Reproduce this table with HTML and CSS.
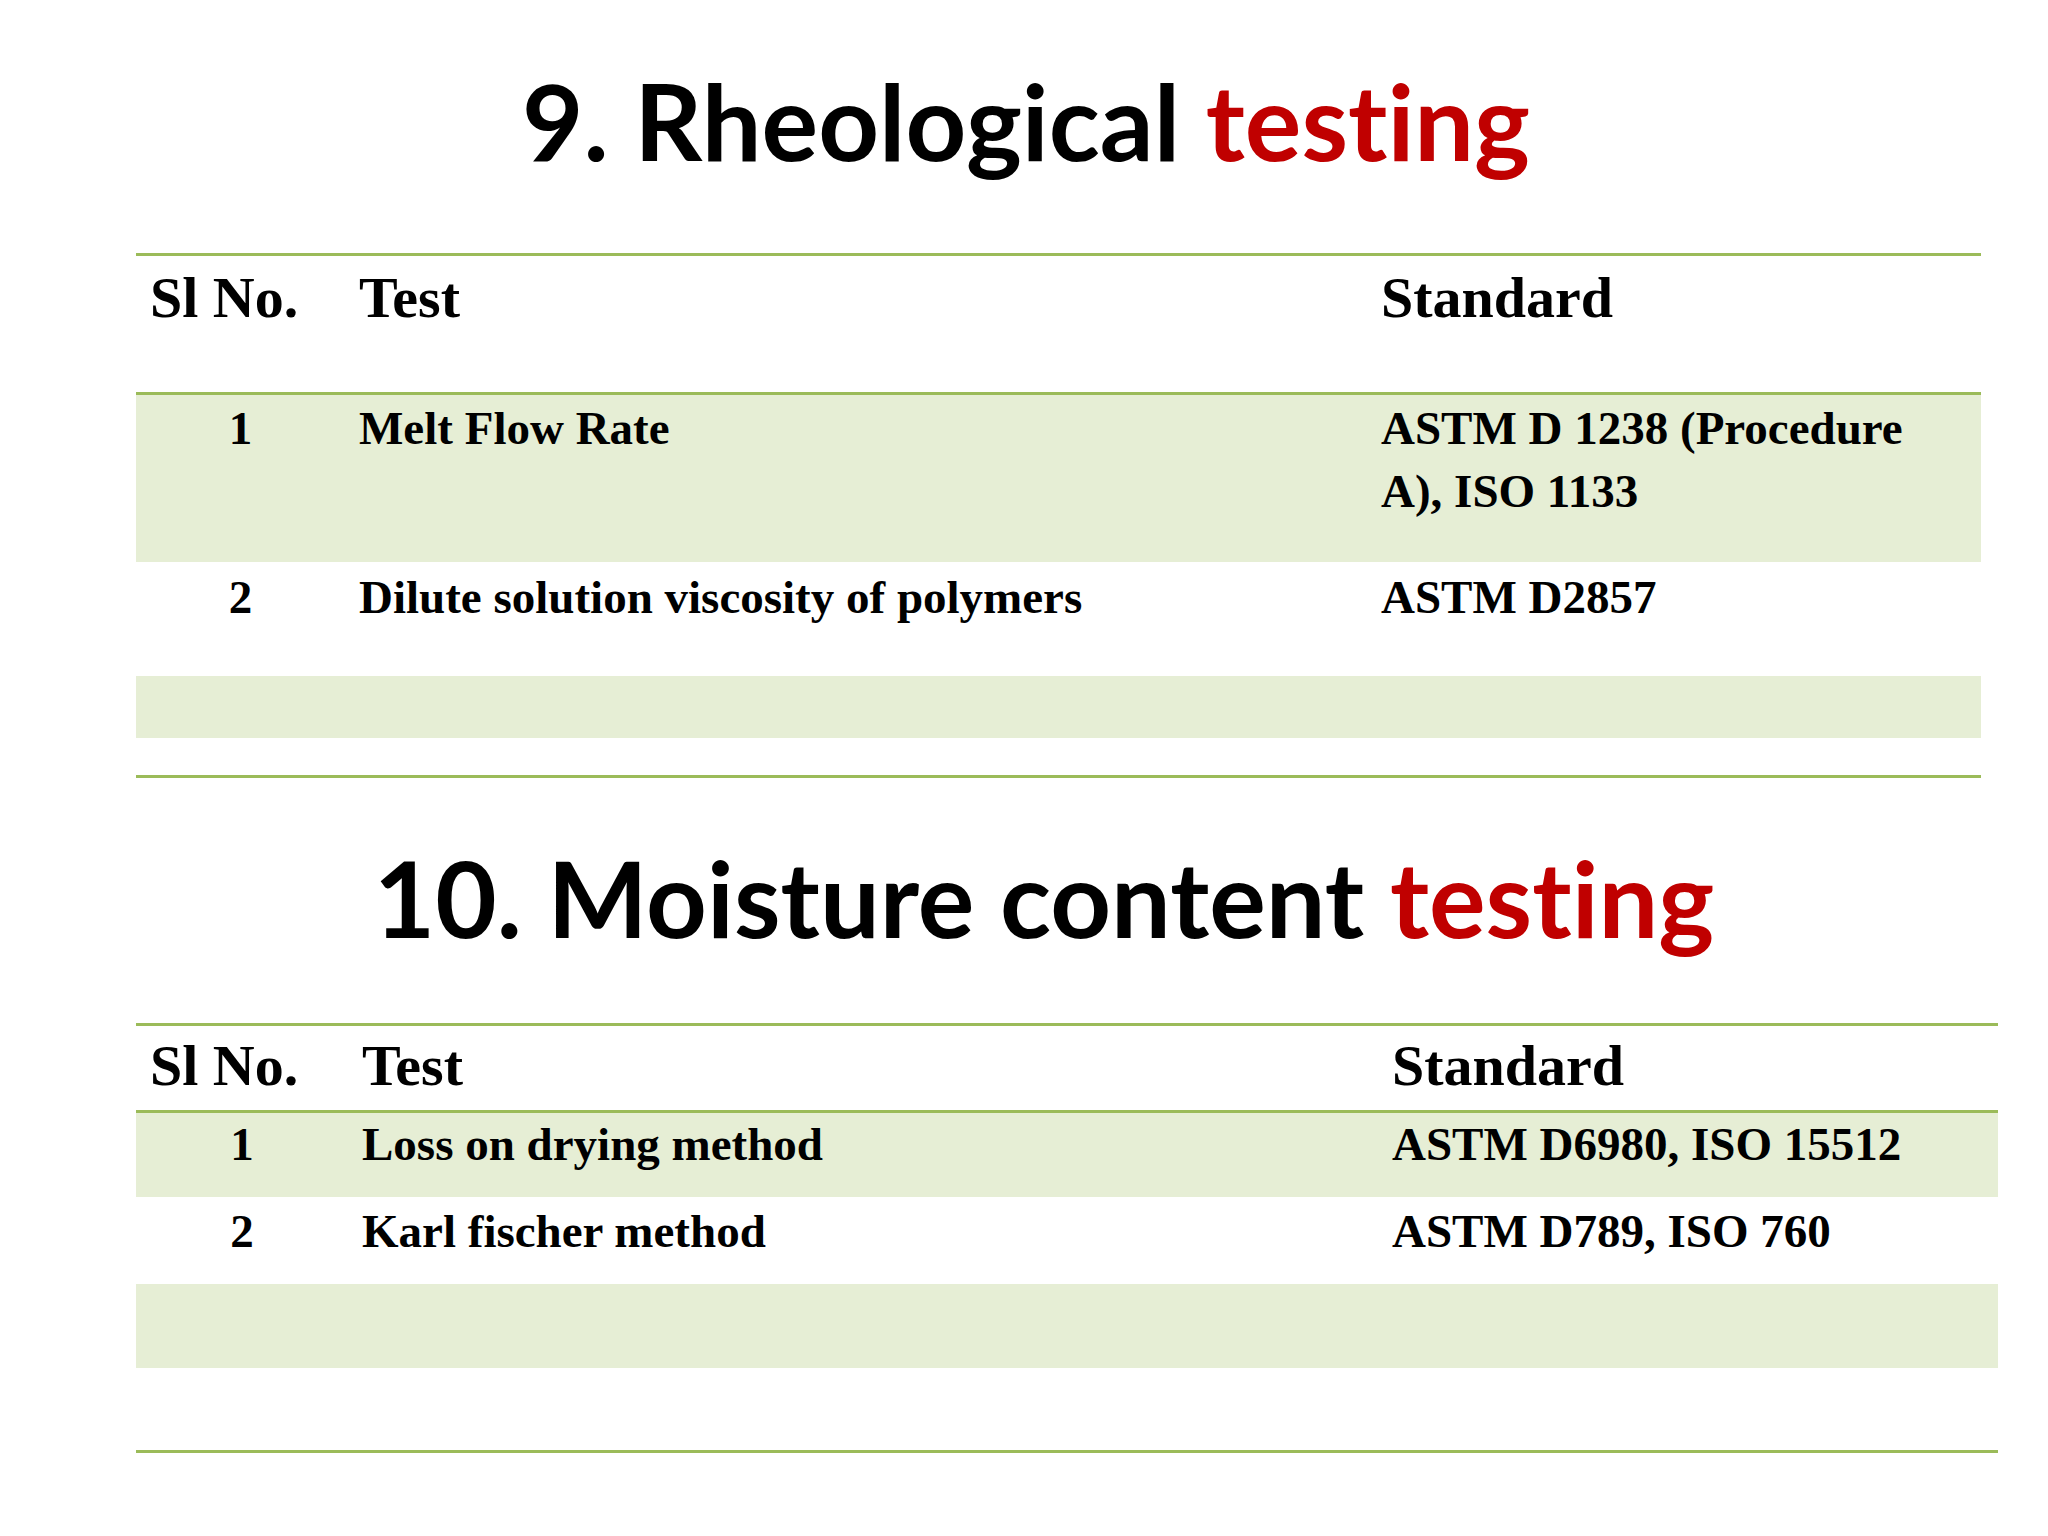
FILE: index.html
```html
<!DOCTYPE html>
<html lang="en">
<head>
<meta charset="utf-8">
<title>Rheological and Moisture content testing</title>
<link rel="stylesheet" href="styles.css">
</head>
<body>
<main class="page">
  <h1 class="title title-one">9. Rheological <span class="accent">testing</span></h1>

  <section class="table table-one">
    <div class="row head">
      <div class="cell num-head">Sl No.</div>
      <div class="cell">Test</div>
      <div class="cell">Standard</div>
    </div>
    <div class="row band first r1">
      <div class="cell num">1</div>
      <div class="cell">Melt Flow Rate</div>
      <div class="cell">ASTM D 1238 (Procedure<br>A), ISO 1133</div>
    </div>
    <div class="row r2">
      <div class="cell num">2</div>
      <div class="cell">Dilute solution viscosity of polymers</div>
      <div class="cell">ASTM D2857</div>
    </div>
    <div class="row band r3"></div>
    <div class="row r4"></div>
  </section>

  <h1 class="title title-two">10. Moisture content <span class="accent">testing</span></h1>

  <section class="table table-two">
    <div class="row head">
      <div class="cell num-head">Sl No.</div>
      <div class="cell">Test</div>
      <div class="cell">Standard</div>
    </div>
    <div class="row band first r1">
      <div class="cell num">1</div>
      <div class="cell">Loss on drying method</div>
      <div class="cell">ASTM D6980, ISO 15512</div>
    </div>
    <div class="row r2">
      <div class="cell num">2</div>
      <div class="cell">Karl fischer method</div>
      <div class="cell">ASTM D789, ISO 760</div>
    </div>
    <div class="row band r3"></div>
    <div class="row r4"></div>
  </section>
</main>
</body>
</html>
```

FILE: styles.css
```css
html, body {
  margin: 0;
  padding: 0;
  background: #ffffff;
}

.page {
  width: 2048px;
  height: 1536px;
  overflow: hidden;
  display: flex;
  flex-direction: column;
}

.title {
  margin: 0;
  font-family: Lato, "Open Sans", sans-serif;
  font-weight: 700;
  font-size: 106px;
  line-height: 106px;
  height: 106px;
  color: #000000;
  text-align: center;
  white-space: nowrap;
  font-variant-ligatures: none;
  font-feature-settings: "liga" 0, "clig" 0;
}

.accent {
  color: #c00000;
}

.title-one {
  margin-top: 67px;
  padding-left: 4px;
}

.title-two {
  margin-top: 66px;
  padding-left: 40px;
}

.table {
  margin-left: 136px;
  border-top: 3px solid #9bbb59;
  border-bottom: 3px solid #9bbb59;
  font-family: "Liberation Serif", "Times New Roman", serif;
  font-weight: 700;
  color: #000000;
  display: flex;
  flex-direction: column;
}

.table-one {
  width: 1845px;
  margin-top: 80px;
}

.table-two {
  width: 1862px;
  margin-top: 73px;
}

.row {
  display: grid;
  font-size: 47px;
  line-height: 63px;
  box-sizing: border-box;
}

.table-one .row {
  grid-template-columns: 209px 1022px 1fr;
}

.table-two .row {
  grid-template-columns: 212px 1030px 1fr;
}

.cell {
  padding-left: 14px;
}

.num {
  padding-left: 0;
  text-align: center;
}

.head {
  font-size: 58px;
  line-height: 70px;
}

.band {
  background: #e6eed5;
}

.first {
  border-top: 3px solid #9bbb59;
}

/* table one rows */
.table-one .head { height: 136px; padding-top: 7px; }
.table-one .r1 { height: 170px; padding-top: 2px; }
.table-one .r2 { height: 114px; padding-top: 4px; }
.table-one .r3 { height: 62px; }
.table-one .r4 { height: 37px; }

/* table two rows */
.table-two .head { height: 84px; padding-top: 5px; }
.table-two .r1 { height: 87px; padding-top: 0; }
.table-two .r2 { height: 87px; padding-top: 3px; }
.table-two .r3 { height: 84px; }
.table-two .r4 { height: 82px; }
```
